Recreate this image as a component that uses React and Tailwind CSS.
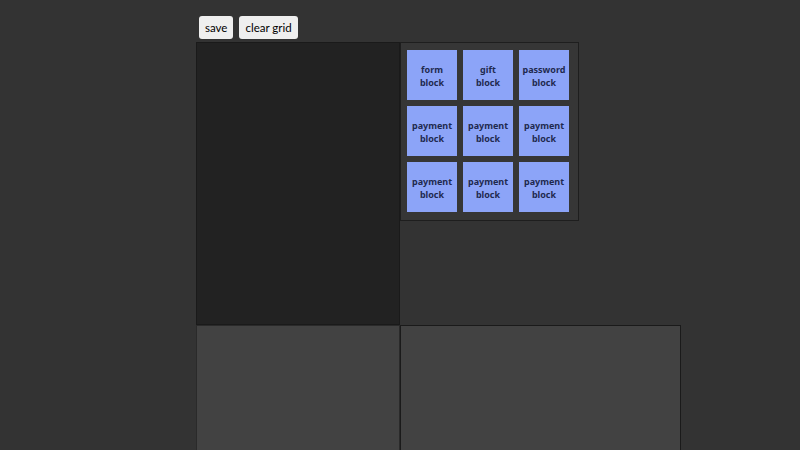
export default function App() {
  const tiles = [
    "form", "gift", "password",
    "payment", "payment", "payment",
    "payment", "payment", "payment",
  ];
  return (
    <div
      className="w-[800px] h-[450px] overflow-hidden bg-[#333333]"
      style={{ fontFamily: '"Noto Sans", "Open Sans", sans-serif' }}
    >
      <div className="ml-[199px] pt-[16px] flex gap-[6px]" style={{ fontFamily: "Lato, sans-serif" }}>
        <button className="h-[23px] px-[6px] rounded-[3px] bg-[#efefef] text-[11.5px] text-black leading-none">
          save
        </button>
        <button className="h-[23px] px-[6px] rounded-[3px] bg-[#efefef] text-[11.5px] text-black leading-none">
          clear grid
        </button>
      </div>
      <div className="ml-[196px] mt-[3px] flex flex-col">
        <div className="flex">
          <div className="w-[204px] h-[283px] bg-[#222222] border border-[#1a1a1a]" />
          <div className="w-[179px] h-[179px] border border-[#1e1e1e] bg-[#363636] pl-[6px] pt-[7px]">
            <div className="grid grid-cols-[repeat(3,50px)] grid-rows-[repeat(3,50px)] gap-[6px]">
              {tiles.map((t, i) => (
                <div
                  key={i}
                  className="bg-[#8ca4f8] flex flex-col items-center justify-center pt-[3px] text-[9px] font-bold leading-[12.5px] text-[#1f2a4f]"
                >
                  <span>{t}</span>
                  <span>block</span>
                </div>
              ))}
            </div>
          </div>
        </div>
        <div className="flex">
          <div className="w-[204px] h-[130px] bg-[#424242] border border-[#2a2a2a]" />
          <div className="w-[281px] h-[130px] bg-[#424242] border border-[#1a1a1a]" />
        </div>
      </div>
    </div>
  );
}
